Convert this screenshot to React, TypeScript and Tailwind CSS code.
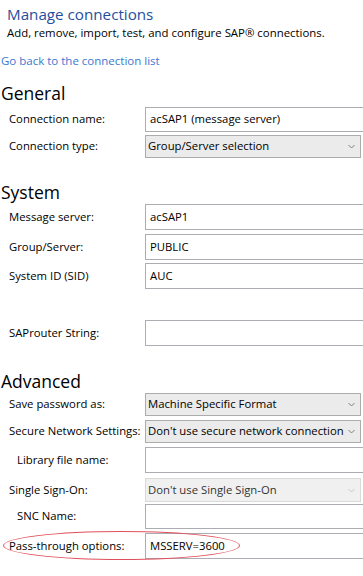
import type { ReactNode } from "react";

const FONT = { fontFamily: '"Segoe UI", "Open Sans", "Noto Sans", sans-serif' };

function Chevron({ light }: { light?: boolean }) {
  return (
    <svg width="7" height="5" viewBox="0 0 7 5" className="shrink-0">
      <path d="M0.5 1 L3.5 4 L6.5 1" fill="none" stroke={light ? "#c8c8c8" : "#808080"} strokeWidth="1" />
    </svg>
  );
}

function Field({ value }: { value?: string }) {
  return (
    <div className="flex h-full w-[220px] items-center border border-r-0 border-[#abadb3] bg-white pl-[4px] text-[11.3px] text-black">
      {value}
    </div>
  );
}

function Select({ value, disabled }: { value: string; disabled?: boolean }) {
  return (
    <div
      className={`flex h-full w-[216px] items-center justify-between border pl-[2px] pr-[5px] text-[11.3px] ${
        disabled ? "border-[#d9d9d9] bg-[#f0f0f0] text-[#333]" : "border-[#acacac] bg-[#ebebeb] text-black"
      }`}
    >
      <span className="whitespace-nowrap">{value}</span>
      <Chevron light={disabled} />
    </div>
  );
}

function Row({
  label,
  indent,
  className,
  children,
}: {
  label: string;
  indent?: boolean;
  className: string;
  children: ReactNode;
}) {
  return (
    <div className={`flex items-stretch ${className}`}>
      <div
        className={`flex w-[145px] shrink-0 items-center whitespace-nowrap text-[11.3px] text-black ${
          indent ? "pl-[17px]" : "pl-[9px]"
        }`}
      >
        {label}
      </div>
      {children}
    </div>
  );
}

export default function App() {
  return (
    <div className="relative h-[576px] w-[363px] overflow-hidden bg-white" style={FONT}>
      <div className="pt-[3px] pl-[7px] text-[15.2px] leading-[22px] text-[#1f4e9e]">Manage connections</div>
      <div className="pl-[7px] text-[11.4px] leading-[16px] text-black">
        Add, remove, import, test, and configure SAP® connections.
      </div>
      <div className="mt-[12px] pl-[1px] text-[11.5px] leading-[16px] text-[#3a78d2]">Go back to the connection list</div>

      <div className="mt-[11px] pl-[1px] text-[17.5px] leading-[26px] text-black">General</div>
      <Row label="Connection name:" className="mt-[1px] h-[25px]">
        <Field value="acSAP1 (message server)" />
      </Row>
      <Row label="Connection type:" className="mt-[3px] h-[23px]">
        <Select value="Group/Server selection" />
      </Row>

      <div className="mt-[22px] pl-[1px] text-[17.5px] leading-[24px] text-black">System</div>
      <Row label="Message server:" className="h-[26px]">
        <Field value="acSAP1" />
      </Row>
      <Row label="Group/Server:" className="mt-[4px] h-[26px]">
        <Field value="PUBLIC" />
      </Row>
      <Row label="System ID (SID)" className="mt-[3px] h-[26px]">
        <Field value="AUC" />
      </Row>
      <Row label="SAProuter String:" className="mt-[31px] h-[26px]">
        <Field />
      </Row>

      <div className="mt-[23px] pl-[1px] text-[17.5px] leading-[24px] text-black">Advanced</div>
      <Row label="Save password as:" className="h-[23px]">
        <Select value="Machine Specific Format" />
      </Row>
      <Row label="Secure Network Settings:" className="mt-[4px] h-[23px]">
        <Select value="Don't use secure network connection" />
      </Row>
      <Row label="Library file name:" indent className="mt-[4px] h-[26px]">
        <Field />
      </Row>
      <Row label="Single Sign-On:" className="mt-[5px] h-[24px]">
        <Select value="Don't use Single Sign-On" disabled />
      </Row>
      <Row label="SNC Name:" indent className="mt-[2px] h-[25px]">
        <Field />
      </Row>
      <Row label="Pass-through options:" className="mt-[4px] h-[26px]">
        <Field value="MSSERV=3600" />
      </Row>

      <div className="pointer-events-none absolute left-[3px] top-[531px] h-[29px] w-[237px] rounded-[50%] border border-[#e0505a]" />
    </div>
  );
}
